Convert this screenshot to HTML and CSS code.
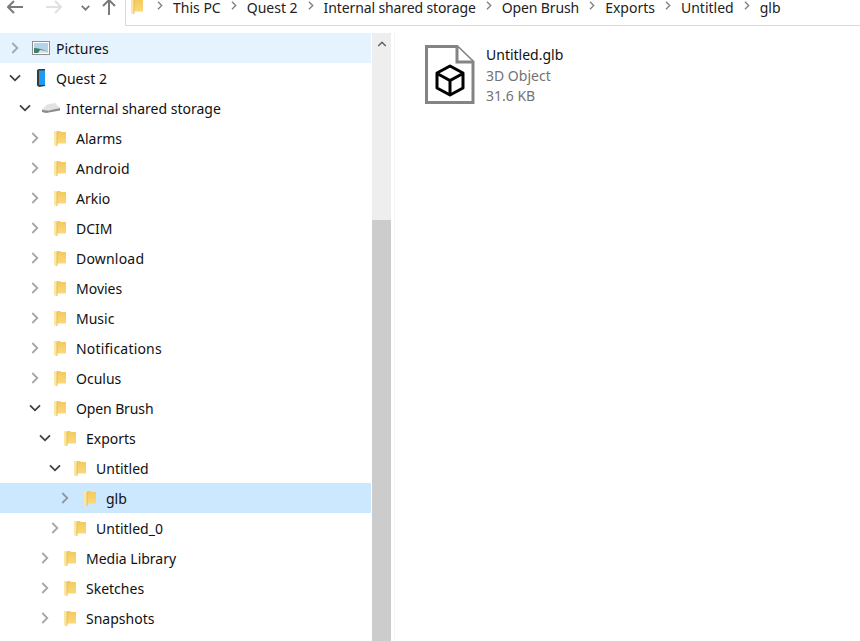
FILE: index.html
```html
<!DOCTYPE html>
<html lang="en">
<head>
<meta charset="utf-8">
<title>glb</title>
<link rel="stylesheet" href="styles.css">
</head>
<body>
<svg class="defs" width="0" height="0" aria-hidden="true">
  <defs>
    <linearGradient id="fold" x1="0" y1="0" x2="0" y2="1"><stop offset="0" stop-color="#f3c95c"/><stop offset="1" stop-color="#fbdc80"/></linearGradient>
    <symbol id="folder" viewBox="0 0 12 15">
      <path d="M0 0H6L7 1H12V12.500H3V15L0 14Z" fill="url(#fold)"/>
      <path d="M0 0H3V15L0 14Z" fill="#fbe6a2"/>
      <path d="M3 1V15" stroke="#e3b84e" stroke-width=".8"/>
    </symbol>
    <symbol id="chev-r" viewBox="0 0 8 12"><path d="M1.300 1 6.300 6 1.300 11" fill="none" stroke="currentColor" stroke-width="1.800"/></symbol>
    <symbol id="chev-d" viewBox="0 0 12 8"><path d="M1 1.300 6 6.300 11 1.300" fill="none" stroke="currentColor" stroke-width="1.800"/></symbol>
  </defs>
</svg>

<header class="top">
  <nav class="nav">
    <svg class="nav-back" width="16" height="14" viewBox="0 0 16 14"><path d="M1 7H16M7 1 1 7l6 6" fill="none" stroke="#7a7a7a" stroke-width="2"/></svg>
    <svg class="nav-fwd" width="16" height="14" viewBox="0 0 16 14"><path d="M0 7H15M9 1l6 6-6 6" fill="none" stroke="#e0e0e0" stroke-width="2"/></svg>
    <svg class="nav-down" width="9" height="6" viewBox="0 0 12 8"><path d="M1 1.300 6 6.300 11 1.300" fill="none" stroke="#7a7a7a" stroke-width="2.400"/></svg>
    <svg class="nav-up" width="14" height="16" viewBox="0 0 14 16"><path d="M7 16V1M1 7l6-6 6 6" fill="none" stroke="#7a7a7a" stroke-width="2"/></svg>
  </nav>
  <div class="address">
    <svg class="addr-folder" width="12" height="15"><use href="#folder"/></svg>
    <div class="crumbs">
      <svg class="sep" width="6" height="9"><use href="#chev-r"/></svg><span>This PC</span>
      <svg class="sep" width="6" height="9"><use href="#chev-r"/></svg><span>Quest 2</span>
      <svg class="sep" width="6" height="9"><use href="#chev-r"/></svg><span class="tight">Internal shared storage</span>
      <svg class="sep" width="6" height="9"><use href="#chev-r"/></svg><span class="tight">Open Brush</span>
      <svg class="sep" width="6" height="9"><use href="#chev-r"/></svg><span>Exports</span>
      <svg class="sep" width="6" height="9"><use href="#chev-r"/></svg><span>Untitled</span>
      <svg class="sep" width="6" height="9"><use href="#chev-r"/></svg><span>glb</span>
    </div>
  </div>
</header>

<div class="body">
  <ul class="tree">
    <li class="row hover d0"><svg class="chev" width="8" height="12"><use href="#chev-r"/></svg>
      <span class="icon"><svg class="nudge" width="18" height="14" viewBox="0 0 18 14"><rect x=".5" y=".5" width="17" height="13" fill="#fff" stroke="#8f8f8f"/><rect x="2" y="2" width="14" height="10" fill="#b5d3e8"/><path d="M2 7c4 0 8 1 14 4v1H2Z" fill="#3f7f6e"/><path d="M8 9c3 0 6 1 8 2v1H6Z" fill="#d8e4e4"/></svg></span><span class="label">Pictures</span></li>
    <li class="row d0"><svg class="chev open" width="12" height="8"><use href="#chev-d"/></svg>
      <span class="icon"><svg class="nudge" width="9" height="18" viewBox="0 0 9 18"><path d="M0 1 2 0H8V17L2 18 0 16.500Z" fill="#3a3a3a"/><rect x="2" y="1.500" width="6" height="14.500" fill="#1e9bf0"/></svg></span><span class="label">Quest 2</span></li>
    <li class="row d1"><svg class="chev open" width="12" height="8"><use href="#chev-d"/></svg>
      <span class="icon"><svg class="nudge" width="18" height="10" viewBox="0 0 18 10"><path d="M0 6.500V9L4 10 18 7.500V5Z" fill="#8c8c8c"/><path d="M0 6.500 5 1.500 13 0 18 5 5 8Z" fill="#e2e2e2"/><rect x="3" y="7.600" width="3" height="1.500" fill="#4fb04f"/></svg></span><span class="label">Internal shared storage</span></li>
    <li class="row d2"><svg class="chev" width="8" height="12"><use href="#chev-r"/></svg><span class="icon"><svg width="12" height="15"><use href="#folder"/></svg></span><span class="label">Alarms</span></li>
    <li class="row d2"><svg class="chev" width="8" height="12"><use href="#chev-r"/></svg><span class="icon"><svg width="12" height="15"><use href="#folder"/></svg></span><span class="label wide">Android</span></li>
    <li class="row d2"><svg class="chev" width="8" height="12"><use href="#chev-r"/></svg><span class="icon"><svg width="12" height="15"><use href="#folder"/></svg></span><span class="label">Arkio</span></li>
    <li class="row d2"><svg class="chev" width="8" height="12"><use href="#chev-r"/></svg><span class="icon"><svg width="12" height="15"><use href="#folder"/></svg></span><span class="label">DCIM</span></li>
    <li class="row d2"><svg class="chev" width="8" height="12"><use href="#chev-r"/></svg><span class="icon"><svg width="12" height="15"><use href="#folder"/></svg></span><span class="label wide">Download</span></li>
    <li class="row d2"><svg class="chev" width="8" height="12"><use href="#chev-r"/></svg><span class="icon"><svg width="12" height="15"><use href="#folder"/></svg></span><span class="label">Movies</span></li>
    <li class="row d2"><svg class="chev" width="8" height="12"><use href="#chev-r"/></svg><span class="icon"><svg width="12" height="15"><use href="#folder"/></svg></span><span class="label">Music</span></li>
    <li class="row d2"><svg class="chev" width="8" height="12"><use href="#chev-r"/></svg><span class="icon"><svg width="12" height="15"><use href="#folder"/></svg></span><span class="label wide">Notifications</span></li>
    <li class="row d2"><svg class="chev" width="8" height="12"><use href="#chev-r"/></svg><span class="icon"><svg width="12" height="15"><use href="#folder"/></svg></span><span class="label">Oculus</span></li>
    <li class="row d2"><svg class="chev open" width="12" height="8"><use href="#chev-d"/></svg><span class="icon"><svg width="12" height="15"><use href="#folder"/></svg></span><span class="label tight">Open Brush</span></li>
    <li class="row d3"><svg class="chev open" width="12" height="8"><use href="#chev-d"/></svg><span class="icon"><svg width="12" height="15"><use href="#folder"/></svg></span><span class="label">Exports</span></li>
    <li class="row d4"><svg class="chev open" width="12" height="8"><use href="#chev-d"/></svg><span class="icon"><svg width="12" height="15"><use href="#folder"/></svg></span><span class="label">Untitled</span></li>
    <li class="row selected d5"><svg class="chev" width="8" height="12"><use href="#chev-r"/></svg><span class="icon"><svg width="12" height="15"><use href="#folder"/></svg></span><span class="label">glb</span></li>
    <li class="row d4"><svg class="chev" width="8" height="12"><use href="#chev-r"/></svg><span class="icon"><svg width="12" height="15"><use href="#folder"/></svg></span><span class="label">Untitled_0</span></li>
    <li class="row d3"><svg class="chev" width="8" height="12"><use href="#chev-r"/></svg><span class="icon"><svg width="12" height="15"><use href="#folder"/></svg></span><span class="label">Media Library</span></li>
    <li class="row d3"><svg class="chev" width="8" height="12"><use href="#chev-r"/></svg><span class="icon"><svg width="12" height="15"><use href="#folder"/></svg></span><span class="label">Sketches</span></li>
    <li class="row d3"><svg class="chev" width="8" height="12"><use href="#chev-r"/></svg><span class="icon"><svg width="12" height="15"><use href="#folder"/></svg></span><span class="label">Snapshots</span></li>
    <li class="row d3"><svg class="chev" width="8" height="12"><use href="#chev-r"/></svg><span class="icon"><svg width="12" height="15"><use href="#folder"/></svg></span></li>
  </ul>

  <div class="scrollbar">
    <div class="track"><svg class="sb-up" width="10" height="6" viewBox="0 0 12 8"><path d="M1 6.700 6 1.700 11 6.700" fill="none" stroke="#606060" stroke-width="2"/></svg></div>
    <div class="thumb"></div>
  </div>

  <main class="content">
    <article class="file">
      <svg class="file-icon" width="50" height="60" viewBox="0 0 50 60">
        <path d="M1.500 1.500H32L48 17V57.500H1.500Z" fill="#fff" stroke="#848484" stroke-width="3"/>
        <path d="M32 1.500V17H48" fill="#fff" stroke="#848484" stroke-width="3"/>
        <path d="M25 21 38 28V43L25 50 12 43V28Z" fill="none" stroke="#000" stroke-width="3" stroke-linejoin="round"/>
        <path d="M13 29 25 35.500 37 29M25 35.500V49" fill="none" stroke="#000" stroke-width="3"/>
      </svg>
      <div class="file-text">
        <div class="file-name">Untitled.glb</div>
        <div class="file-meta">3D Object</div>
        <div class="file-meta">31.6 KB</div>
      </div>
    </article>
  </main>
</div>
</body>
</html>
```
FILE: styles.css
```css
* { box-sizing: border-box; }
html, body { margin: 0; height: 100%; overflow: hidden; background: #fff; }
body {
  display: flex;
  flex-direction: column;
  font-family: "Noto Sans", "Open Sans", sans-serif;
  font-size: 14px;
  color: #111;
}
.defs { position: absolute; }
.tight { letter-spacing: -.12px; }
.wide { letter-spacing: .2px; }

.top { display: flex; height: 33px; flex: none; padding-bottom: 7px; }
.nav { width: 125px; flex: none; display: flex; align-items: flex-start; }
.nav-back { margin: 0 0 0 7px; }
.nav-fwd { margin-left: 23px; }
.nav-down { margin: 5px 0 0 19px; }
.nav-up { margin: -1px 0 0 12px; }

.address {
  flex: 1;
  display: flex;
  align-items: flex-start;
  border-left: 1px solid #d9d9d9;
  border-bottom: 1px solid #d9d9d9;
  padding-left: 5px;
  overflow: hidden;
}
.addr-folder { flex: none; margin-top: -1px; }
.crumbs {
  display: flex;
  align-items: center;
  height: 16px;
  margin-left: 14px;
  line-height: 14px;
  color: #222;
  white-space: nowrap;
}
.sep { color: #808080; margin: 0 10px 5px 0; flex: none; }
.crumbs span { margin-right: 10px; }

.body { flex: 1; display: flex; min-height: 0; }
.tree {
  list-style: none;
  margin: 0;
  padding: 0;
  width: 371px;
  flex: none;
  overflow: hidden;
}
.row {
  display: flex;
  align-items: center;
  height: 30px;
  position: relative;
  white-space: nowrap;
}
.row.d0 { padding-left: 0; }
.row.d1 { padding-left: 10px; }
.row.d2 { padding-left: 20px; }
.row.d3 { padding-left: 30px; }
.row.d4 { padding-left: 40px; }
.row.d5 { padding-left: 50px; }
.hover { background: #e5f3ff; }
.selected { background: #cce8ff; }

.chev { color: #a6a6a6; flex: none; margin: 0 11px; }
.chev.open { color: #404040; margin: 0 9px; }
.selected .chev { color: #8c98a4; }
.icon { width: 20px; flex: none; display: flex; justify-content: center; align-items: center; margin-right: 6px; }
.nudge { margin-left: 2px; }
.label { color: #111; }

.scrollbar {
  width: 19px;
  margin-left: 1px;
  flex: none;
  display: flex;
  flex-direction: column;
}
.track { height: 187px; background: #eeeeee; display: flex; justify-content: center; padding-top: 8px; flex: none; }
.sb-up { display: block; }
.thumb { flex: 1; background: #cccccc; }

.content { flex: 1; border-left: 1px solid #f4f4f4; margin-left: 3px; padding: 12px 0 0 30px; }
.file { display: flex; gap: 11px; align-items: flex-start; }
.file-icon { flex: none; }
.file-text { line-height: 20.5px; }
.file-name { color: #111; }
.file-meta { color: #737373; }
```
